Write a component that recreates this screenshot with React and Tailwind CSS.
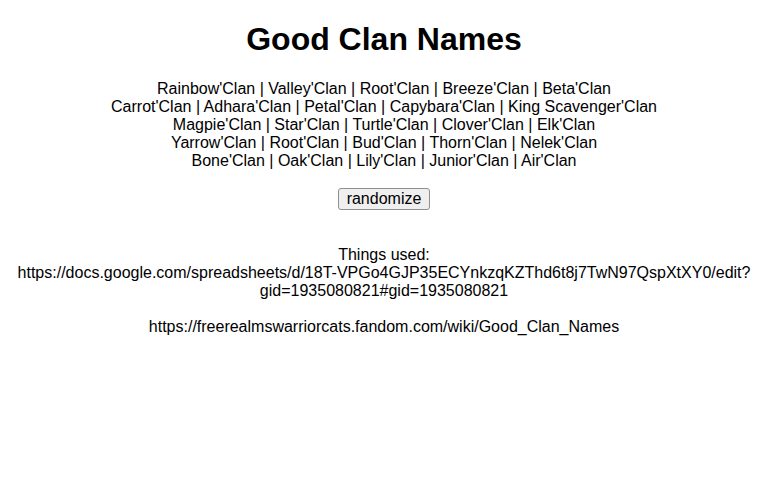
export default function App() {
  const names = [
    "Rainbow'Clan | Valley'Clan | Root'Clan | Breeze'Clan | Beta'Clan",
    "Carrot'Clan | Adhara'Clan | Petal'Clan | Capybara'Clan | King Scavenger'Clan",
    "Magpie'Clan | Star'Clan | Turtle'Clan | Clover'Clan | Elk'Clan",
    "Yarrow'Clan | Root'Clan | Bud'Clan | Thorn'Clan | Nelek'Clan",
    "Bone'Clan | Oak'Clan | Lily'Clan | Junior'Clan | Air'Clan",
  ];
  return (
    <div
      className="min-h-[480px] w-full bg-white text-black text-center px-2"
      style={{ fontFamily: '"Liberation Sans", Arial, sans-serif' }}
    >
      <div className="pt-[21px]">
        <h1 className="text-[32px] font-bold leading-[37px]">Good Clan Names</h1>
      </div>
      <div className="mt-[22px] text-[16px] leading-[18px]">
        {names.map((n, i) => (
          <div key={i}>{n}</div>
        ))}
      </div>
      <div className="mt-[18px] flex justify-center">
        <button className="text-[16px] leading-[18px] px-[8px] py-[1px] border border-[#8f8f8f] rounded-[3px] bg-[#efefef] text-black">
          randomize
        </button>
      </div>
      <div className="mt-[36px] text-[16px] leading-[18px]">
        <div>Things used:</div>
        <div>https://docs.google.com/spreadsheets/d/18T-VPGo4GJP35ECYnkzqKZThd6t8j7TwN97QspXtXY0/edit?</div>
        <div>gid=1935080821#gid=1935080821</div>
        <div className="h-[18px]"></div>
        <div>https://freerealmswarriorcats.fandom.com/wiki/Good_Clan_Names</div>
      </div>
    </div>
  );
}
